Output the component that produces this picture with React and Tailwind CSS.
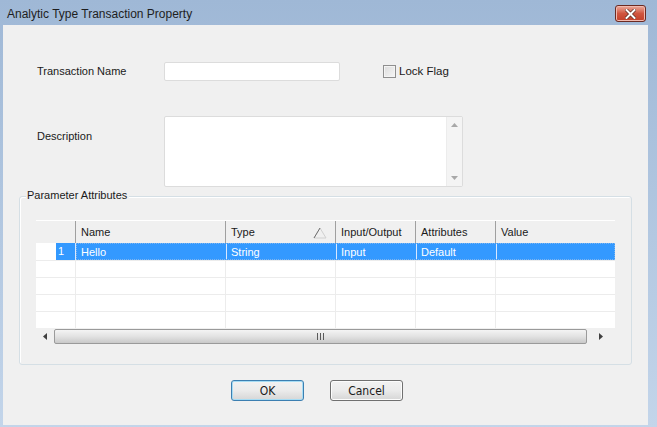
import React from "react";

const cols = [
  { key: "name", label: "Name", w: "w-[150px]" },
  { key: "type", label: "Type", w: "w-[110px]" },
  { key: "io", label: "Input/Output", w: "w-[80px]" },
  { key: "attr", label: "Attributes", w: "w-[80px]" },
  { key: "value", label: "Value", w: "flex-1" },
];

const rows = [{ name: "Hello", type: "String", io: "Input", attr: "Default", value: "" }];

function SortGlyph() {
  return (
    <svg width="14" height="12" viewBox="0 0 14 12" className="shrink-0">
      <path d="M1 11 L7 1 L13 11 Z" fill="none" stroke="#d0d0d0" strokeWidth="1" />
      <path d="M1 11 L7 1" fill="none" stroke="#707070" strokeWidth="1" />
    </svg>
  );
}

function Grid() {
  const empty = [0, 1, 2, 3];
  return (
    <div className="ml-[16px] mt-[23px] w-[579px] flex flex-col bg-white">
      {/* header */}
      <div className="flex h-[23px] bg-[#f0f0f0] border-t border-white">
        <div className="w-[40px] border-r border-[#a0a0a0]" />
        {cols.map((c) => (
          <div key={c.key} className={`${c.w} flex items-center justify-between pl-[5px] pr-[8px] pt-[1px] ${c.key !== "value" ? "border-r border-[#a0a0a0]" : ""}`}>
            <span>{c.label}</span>
            {c.key === "type" && <SortGlyph />}
          </div>
        ))}
      </div>
      {/* selected row */}
      {rows.map((r, i) => (
        <div key={i} className="flex h-[17px]">
          <div className="w-[40px] flex">
            <div className="w-[20px] bg-white" />
            <div className="flex-1 bg-[#3399ff] text-white pl-[2px] leading-[17px] border-r border-[#d8e8ff]">{i + 1}</div>
          </div>
          <div className="flex-1 flex bg-[#3399ff] text-white border border-dotted border-[#7fb5ee]">
            {cols.map((c) => (
              <div key={c.key} className={`${c.w} pl-[4px] leading-[16px] ${c.key !== "value" ? "border-r border-[#d8e8ff]" : ""}`}>
                {r[c.key]}
              </div>
            ))}
          </div>
        </div>
      ))}
      {empty.map((e) => (
        <div key={e} className="flex h-[17px] border-t border-[#ececec]">
          <div className="w-[40px] border-r border-[#ececec]" />
          {cols.map((c) => (
            <div key={c.key} className={`${c.w} ${c.key !== "value" ? "border-r border-[#ececec]" : ""}`} />
          ))}
        </div>
      ))}
      {/* horizontal scrollbar */}
      <div className="flex h-[17px] bg-[#f0f0f0] items-stretch">
        <div className="w-[18px] flex items-center justify-center">
          <svg width="4" height="7" viewBox="0 0 4 7"><path d="M4 0 L0 3.5 L4 7 Z" fill="#404040" /></svg>
        </div>
        <div className="w-[533px] my-[1px] rounded-[2px] border border-[#9a9a9a] bg-gradient-to-b from-[#f4f4f4] via-[#e2e2e2] to-[#c9c9c9] flex items-center justify-center">
          <div className="flex gap-[2px]">
            <div className="w-px h-[7px] bg-[#5a5a5a]" />
            <div className="w-px h-[7px] bg-[#5a5a5a]" />
            <div className="w-px h-[7px] bg-[#5a5a5a]" />
          </div>
        </div>
        <div className="flex-1 flex items-center justify-center">
          <svg width="4" height="7" viewBox="0 0 4 7"><path d="M0 0 L4 3.5 L0 7 Z" fill="#404040" /></svg>
        </div>
      </div>
    </div>
  );
}

function WinButton({ children, primary }) {
  return (
    <button
      className={`w-[73px] h-[21px] rounded-[3px] border text-[12px] bg-gradient-to-b from-[#f2f2f2] via-[#ebebeb] to-[#d6d6d6] ${
        primary ? "border-[#3c7fb1] shadow-[inset_0_0_0_1px_#a6dcf4]" : "border-[#707070] shadow-[inset_0_0_0_1px_#fcfcfc]"
      }`}
      style={{ fontFamily: "Tahoma, 'DejaVu Sans Condensed', 'Liberation Sans', sans-serif" }}
    >
      {children}
    </button>
  );
}

export default function App() {
  return (
    <div
      className="w-[657px] h-[427px] flex flex-col bg-gradient-to-b from-[#9fb8d6] to-[#c3d5ea] text-[11px] text-[#1a1a1a]"
      style={{ fontFamily: "'Liberation Sans', Arial, sans-serif" }}
    >
      {/* title bar */}
      <div className="h-[25px] flex items-start justify-between">
        <div className="pl-[7px] pt-[5px] text-[12px] text-[#1e1e1e]">Analytic Type Transaction Property</div>
        <button className="mt-[5px] mr-[11px] w-[31px] h-[17px] rounded-[3px] border border-[#6b2a22] bg-gradient-to-b from-[#e9a99c] via-[#d0553f] to-[#c2402a] flex items-center justify-center shadow-[inset_0_0_0_1px_#f1b9ae]">
          <svg width="11" height="10" viewBox="0 0 11 10">
            <path d="M1.5 1 L9.5 9 M9.5 1 L1.5 9" stroke="#5a2a22" strokeWidth="3.4" strokeLinecap="square" />
            <path d="M1.5 1 L9.5 9 M9.5 1 L1.5 9" stroke="#ffffff" strokeWidth="2" strokeLinecap="square" />
          </svg>
        </button>
      </div>

      {/* client area */}
      <div className="ml-[3px] mr-[9px] mb-[2px] flex-1 bg-[#f0f0f0] flex flex-col">
        <div className="mt-[37px] ml-[34px] flex items-center h-[19px]">
          <div className="w-[127px]">Transaction Name</div>
          <div className="w-[176px] h-[19px] bg-white border border-[#dcdcdc] rounded-[2px]" />
          <div className="ml-[43px] w-[13px] h-[13px] border border-[#8f8f8f] bg-gradient-to-br from-[#dcdcdc] to-[#f6f6f6] shadow-[inset_0_0_0_1px_#f4f4f4]" />
          <div className="ml-[3px] text-[11.5px]">Lock Flag</div>
        </div>

        <div className="mt-[35px] ml-[34px] flex items-start">
          <div className="w-[127px] pt-[12px]">Description</div>
          <div className="w-[299px] h-[71px] bg-white border border-[#dcdcdc] rounded-[2px] flex justify-end">
            <div className="w-[16px] bg-[#f4f4f4] border-l border-[#ececec] flex flex-col items-center justify-between py-[6px]">
              <svg width="7" height="4" viewBox="0 0 7 4"><path d="M0 4 L3.5 0 L7 4 Z" fill="#a8a8a8" /></svg>
              <svg width="7" height="4" viewBox="0 0 7 4"><path d="M0 0 L3.5 4 L7 0 Z" fill="#a8a8a8" /></svg>
            </div>
          </div>
        </div>

        <div className="relative mt-[9px] ml-[16px] w-[613px] h-[169px] border border-[#d5dfe5] rounded-[3px] shadow-[inset_1px_1px_0_#ffffff]">
          <span className="absolute -top-[8px] left-[6px] bg-[#f0f0f0] pr-[2px] pl-[1px] leading-[13px]">Parameter Attributes</span>
          <Grid />
        </div>

        <div className="mt-[15px] flex justify-center gap-[26px] pr-[17px]">
          <WinButton primary>OK</WinButton>
          <WinButton>Cancel</WinButton>
        </div>
      </div>
    </div>
  );
}
